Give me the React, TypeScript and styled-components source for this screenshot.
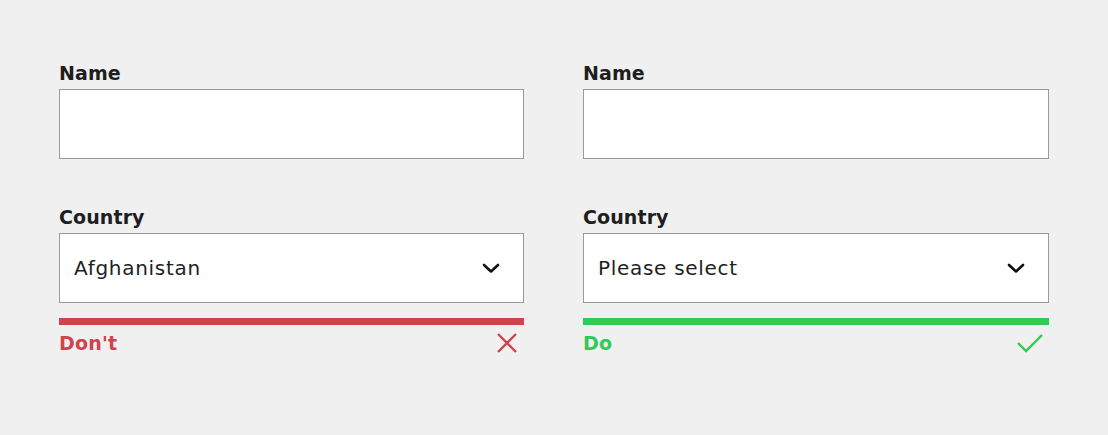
import React from "react";
import styled, { createGlobalStyle } from "styled-components";

const Global = createGlobalStyle`
  html, body { margin: 0; padding: 0; background: #f0f0f0; }
  body { font-family: "DejaVu Sans", "Noto Sans", sans-serif; }
`;

const Page = styled.div`
  display: grid;
  grid-template-columns: 465px 466px;
  column-gap: 59px;
  padding: 61px 59px 0;
  height: 435px;
  box-sizing: border-box;
  background: #f0f0f0;
`;

const Column = styled.div`
  display: flex;
  flex-direction: column;
`;

const Field = styled.div<{ $spaced?: boolean }>`
  display: flex;
  flex-direction: column;
  margin-top: ${(p) => (p.$spaced ? "46px" : "0")};
`;

const Label = styled.label`
  font-size: 19px;
  line-height: 24px;
  font-weight: 700;
  letter-spacing: 0.1px;
  color: #1e1e1e;
  margin-bottom: 4px;
`;

const Input = styled.div`
  height: 70px;
  box-sizing: border-box;
  background: #fff;
  border: 1px solid #9a9a9a;
`;

const Select = styled.div`
  height: 70px;
  box-sizing: border-box;
  background: #fff;
  border: 1px solid #9a9a9a;
  display: flex;
  align-items: center;
  justify-content: space-between;
  padding: 0 23px 0 14px;
  font-size: 20px;
  letter-spacing: 0.7px;
  color: #1e1e1e;
`;

const Bar = styled.div<{ $color: string }>`
  height: 7px;
  margin-top: 15px;
  background: ${(p) => p.$color};
`;

const Verdict = styled.div<{ $color: string }>`
  display: flex;
  justify-content: space-between;
  align-items: center;
  margin-top: 6px;
  font-size: 19px;
  line-height: 24px;
  font-weight: 700;
  letter-spacing: 0.2px;
  color: ${(p) => p.$color};
`;

const Chevron = () => (
  <svg width="18" height="12" viewBox="0 0 18 12">
    <path d="M2 3 L9 9.5 L16 3" fill="none" stroke="#111" strokeWidth="2.6" strokeLinecap="round" strokeLinejoin="round" />
  </svg>
);

const Cross = ({ color }: { color: string }) => (
  <svg width="22" height="22" viewBox="0 0 22 22" style={{ marginRight: 6 }}>
    <path d="M2 2 L20 20 M20 2 L2 20" stroke={color} strokeWidth="2.4" fill="none" />
  </svg>
);

const Check = ({ color }: { color: string }) => (
  <svg width="28" height="22" viewBox="0 0 28 22" style={{ marginRight: 5 }}>
    <path d="M2 11 L10 19 L26 3" stroke={color} strokeWidth="2.4" fill="none" />
  </svg>
);

const RED = "#d1434c";
const GREEN = "#2ecb55";

type ExampleProps = { value: string; good: boolean };

const Example = ({ value, good }: ExampleProps) => {
  const color = good ? GREEN : RED;
  return (
    <Column>
      <Field>
        <Label>Name</Label>
        <Input />
      </Field>
      <Field $spaced>
        <Label>Country</Label>
        <Select>
          <span>{value}</span>
          <Chevron />
        </Select>
      </Field>
      <Bar $color={color} />
      <Verdict $color={color}>
        <span>{good ? "Do" : "Don't"}</span>
        {good ? <Check color={color} /> : <Cross color={color} />}
      </Verdict>
    </Column>
  );
};

export default function App() {
  return (
    <>
      <Global />
      <Page>
        <Example value="Afghanistan" good={false} />
        <Example value="Please select" good />
      </Page>
    </>
  );
}
